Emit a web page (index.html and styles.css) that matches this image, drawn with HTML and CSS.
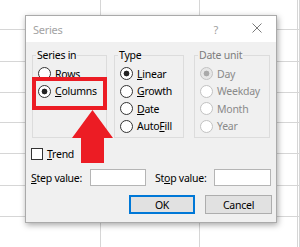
FILE: index.html
```html
<!DOCTYPE html>
<html lang="en">
<head>
<meta charset="utf-8">
<title>Series</title>
<link rel="stylesheet" href="styles.css">
</head>
<body>
<div class="sheet">
  <div class="cell"></div><div class="cell"></div><div class="cell"></div><div class="cell"></div>
  <div class="cell"></div><div class="cell"></div><div class="cell"></div><div class="cell"></div>
  <div class="cell"></div><div class="cell"></div><div class="cell"></div><div class="cell"></div>
  <div class="cell"></div><div class="cell"></div><div class="cell"></div><div class="cell"></div>
  <div class="cell"></div><div class="cell"></div><div class="cell"></div><div class="cell"></div>
  <div class="cell"></div><div class="cell"></div><div class="cell"></div><div class="cell"></div>
  <div class="cell"></div><div class="cell"></div><div class="cell"></div><div class="cell"></div>
  <div class="cell"></div><div class="cell"></div><div class="cell"></div><div class="cell"></div>
</div>

<div class="dialog">
  <div class="titlebar">
    <span class="title">Series</span>
    <span class="help">?</span>
    <svg class="close" viewBox="0 0 10 10" width="10" height="10"><path d="M0.5 0.5 L9.5 9.5 M9.5 0.5 L0.5 9.5" stroke="#7a7a7a" stroke-width="1" fill="none"/></svg>
  </div>
  <div class="content">
    <div class="groups">
      <fieldset class="group g-series">
        <legend>Series in</legend>
        <div class="opt"><span class="radio"></span><span><u>R</u>ows</span></div>
        <div class="opt"><span class="radio on"></span><span><u>C</u>olumns</span></div>
      </fieldset>
      <fieldset class="group g-type">
        <legend>Type</legend>
        <div class="opt"><span class="radio on"></span><span><u>L</u>inear</span></div>
        <div class="opt"><span class="radio"></span><span><u>G</u>rowth</span></div>
        <div class="opt"><span class="radio"></span><span><u>D</u>ate</span></div>
        <div class="opt"><span class="radio"></span><span>Auto<u>F</u>ill</span></div>
      </fieldset>
      <fieldset class="group g-date disabled">
        <legend>Date unit</legend>
        <div class="opt"><span class="radio on"></span><span>Day</span></div>
        <div class="opt"><span class="radio"></span><span>Weekday</span></div>
        <div class="opt"><span class="radio"></span><span>Month</span></div>
        <div class="opt"><span class="radio"></span><span>Year</span></div>
      </fieldset>
    </div>
    <div class="trend"><span class="check"></span><span><u>T</u>rend</span></div>
    <div class="values">
      <span class="vlabel"><u>S</u>tep value:</span>
      <span class="input step"></span>
      <span class="vlabel stop">St<u>o</u>p value:</span>
      <span class="input stopin"></span>
    </div>
    <div class="buttons">
      <span class="btn default">OK</span>
      <span class="btn">Cancel</span>
    </div>
  </div>
</div>

<div class="highlight"></div>
<svg class="arrow" viewBox="0 0 42 54" width="42" height="54"><polygon points="20.5,0 41,28 32,28 32,53 9,53 9,28 0,28" fill="#ec1c24"/></svg>
</body>
</html>
```

FILE: styles.css
```css
* { box-sizing: border-box; }
html, body { margin: 0; padding: 0; }
body {
  width: 300px;
  height: 247px;
  overflow: hidden;
  position: relative;
  background: #ffffff;
  font-family: "Noto Sans", "Open Sans", sans-serif;
  font-size: 10.5px;
  letter-spacing: -0.25px;
  color: #000;
}

.sheet {
  display: grid;
  grid-template-columns: 101px 99px 98px 2px;
  grid-template-rows: 30px 32px 31px 30px 31px 32px 31px 31px;
}
.cell {
  border-right: 1px solid #d6d6d6;
  border-bottom: 1px solid #d6d6d6;
}

.dialog {
  position: absolute;
  left: 25px;
  top: 15px;
  width: 252px;
  height: 208px;
  border: 1px solid #aaaaaa;
  background: #f0f0f0;
  box-shadow: 1px 2px 6px rgba(0, 0, 0, 0.35);
  display: flex;
  flex-direction: column;
}

.titlebar {
  height: 26px;
  background: #ffffff;
  display: flex;
  align-items: center;
  padding: 0 14px 0 7px;
}
.title { color: #a3a3a3; font-size: 11px; }
.help { margin-left: auto; margin-right: 34px; color: #a0a0a0; font-size: 11px; }
.close { display: block; margin-top: -2px; }

.content {
  display: flex;
  flex-direction: column;
  padding: 6px 4px 0 5px;
}

.groups {
  display: flex;
  margin-left: 1px;
  height: 90px;
}
.group {
  margin: 0;
  padding: 3px 0 0 3px;
  border: 1px solid #dcdcdc;
  height: 90px;
  min-width: 0;
}
.group legend {
  padding: 0 1px;
  line-height: 14px;
}
.g-series { width: 75px; }
.g-type { width: 70px; margin-left: 7px; }
.g-date { width: 76px; margin-left: 10px; }

.opt {
  display: flex;
  align-items: center;
  height: 17.5px;
  margin-left: 2px;
}
.radio {
  width: 13px;
  height: 13px;
  flex: none;
  border-radius: 50%;
  border: 1px solid #333333;
  background: #ffffff;
  margin-right: 4px;
}
.radio.on {
  background: radial-gradient(circle, #222 0, #222 2.6px, #ffffff 3.2px);
}
.disabled legend { color: #7d7d7d; }
.disabled .opt { color: #8a8a8a; }
.disabled .radio { border-color: #c2c2c2; }
.disabled .radio.on {
  background: radial-gradient(circle, #a9a9a9 0, #a9a9a9 2.6px, #e6e6e6 3.2px);
}

.trend {
  display: flex;
  align-items: center;
  height: 12px;
  margin-top: 10px;
}
.check {
  width: 12px;
  height: 12px;
  border: 1px solid #333333;
  background: #ffffff;
  margin-right: 4px;
}

.values {
  display: flex;
  align-items: center;
  height: 17px;
  margin-top: 9px;
}
.vlabel { width: 59px; flex: none; }
.vlabel.stop { margin-left: 9px; }
.input {
  height: 17px;
  border: 1px solid #b5b5b5;
  background: #ffffff;
  flex: none;
}
.input.step { width: 56px; }
.input.stopin { width: 57px; }

.buttons {
  display: flex;
  justify-content: flex-end;
  gap: 10px;
  margin-top: 9px;
}
.btn {
  height: 19px;
  width: 67px;
  display: flex;
  align-items: center;
  justify-content: center;
  background: #e1e1e1;
  border: 1px solid #adadad;
}
.btn.default {
  width: 66px;
  border: 2px solid #0078d7;
}

.highlight {
  position: absolute;
  left: 32px;
  top: 77px;
  width: 75px;
  height: 33px;
  border: 4px solid #ec1c24;
}
.arrow {
  position: absolute;
  left: 72px;
  top: 110px;
  display: block;
}
```
